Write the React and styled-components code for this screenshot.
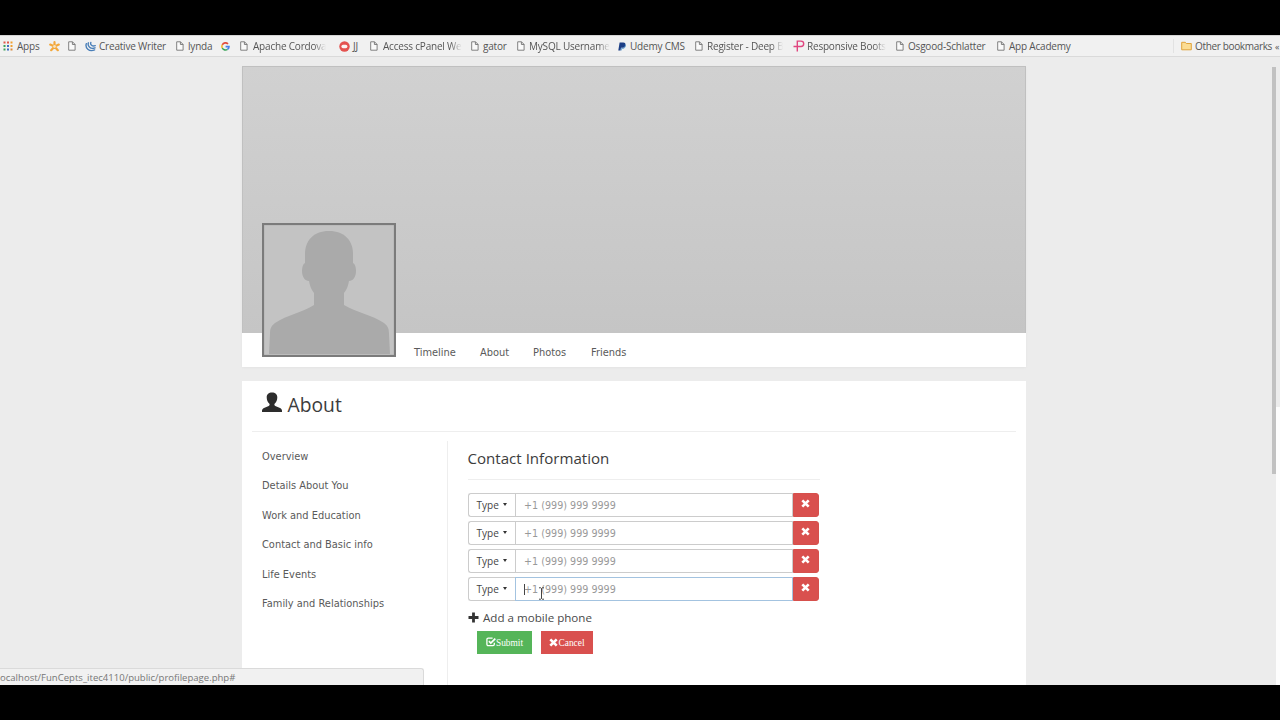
import styled, { createGlobalStyle, css } from "styled-components";

const phones = [1, 2, 3, 4];

const sections = [
  "Overview",
  "Details About You",
  "Work and Education",
  "Contact and Basic info",
  "Life Events",
  "Family and Relationships",
];

const bookmarks = [
  { icon: "apps", label: "Apps", width: 46, gap: 4 },
  { icon: "star", width: 19 },
  { icon: "file", width: 17 },
  { icon: "swirl", label: "Creative Writer", width: 91, gap: 3 },
  { icon: "file", label: "lynda", width: 45, gap: 4 },
  { icon: "google", width: 19 },
  { icon: "file", label: "Apache Cordova", width: 99, gap: 5, fade: true },
  { icon: "circle", label: "JJ", width: 31, gap: 3 },
  { icon: "file", label: "Access cPanel We", width: 101, gap: 5, fade: true },
  { icon: "file", label: "gator", width: 46, gap: 4 },
  { icon: "file", label: "MySQL Username", width: 101, gap: 4, fade: true },
  { icon: "paypal", label: "Udemy CMS", width: 77, gap: 4 },
  { icon: "file", label: "Register - Deep B", width: 98, gap: 4, fade: true },
  { icon: "pink", label: "Responsive Boots", width: 103, gap: 2, fade: true },
  { icon: "file", label: "Osgood-Schlatter", width: 101, gap: 4 },
  { icon: "file", label: "App Academy", width: 80, gap: 4 },
];

const icons = {
  apps: (
    <svg width="10" height="10" viewBox="0 0 10 10">
      <path d="M0.5 0.5h2v2h-2z" fill="#e0564a" />
      <path d="M4 0.5h2v2h-2z" fill="#e0564a" />
      <path d="M7.5 0.5h2v2h-2z" fill="#f0a030" />
      <path d="M0.5 4h2v2h-2z" fill="#3da05a" />
      <path d="M4 4h2v2h-2z" fill="#3f6fc4" />
      <path d="M7.5 4h2v2h-2z" fill="#f0a030" />
      <path d="M0.5 7.5h2v2h-2z" fill="#3da05a" />
      <path d="M4 7.5h2v2h-2z" fill="#3f6fc4" />
      <path d="M7.5 7.5h2v2h-2z" fill="#d98a3c" />
    </svg>
  ),
  star: (
    <svg width="11" height="11" viewBox="0 0 11 11">
      <path
        d="M5.5 5.5V1.2M5.5 5.5L1.2 3.6M5.5 5.5L2.2 9.2M5.5 5.5L8.8 9.2M5.5 5.5L9.8 3.6"
        stroke="#f3a83c"
        strokeWidth="2.2"
        strokeLinecap="round"
        fill="none"
      />
      <circle cx="5.5" cy="5.5" r="1.4" fill="#f8e3bf" />
    </svg>
  ),
  file: (
    <svg width="8" height="10" viewBox="0 0 8 10">
      <path
        d="M0.7 0.8h3.8l2.6 2.6v5.8H0.7zM4.4 0.8v2.7h2.7"
        fill="#fafafa"
        stroke="#757575"
        strokeWidth="0.9"
      />
    </svg>
  ),
  swirl: (
    <svg width="11" height="11" viewBox="0 0 11 11">
      <path
        d="M1.4 2.6C-0.2 6.6 4 11.4 9.6 8.9M3.4 1.8C2.2 5.2 5.6 8.6 10 6.8M5.8 1.4C5 3.6 7.2 5.8 10.2 4.6"
        fill="none"
        stroke="#4a7fb8"
        strokeWidth="1.4"
        strokeLinecap="round"
      />
    </svg>
  ),
  google: (
    <svg width="9" height="9" viewBox="0 0 9 9" fill="none" strokeWidth="1.6">
      <path d="M1.3 2.8A3.5 3.5 0 0 1 7 2" stroke="#e24a3b" />
      <path d="M1.3 6A3.5 3.5 0 0 1 1.3 2.8" stroke="#f3b92f" />
      <path d="M6.5 7.3A3.5 3.5 0 0 1 1.3 6" stroke="#3ba55b" />
      <path d="M4.6 4.6H8A3.5 3.5 0 0 1 6.5 7.3" stroke="#4a80e8" />
    </svg>
  ),
  circle: (
    <svg width="11" height="11" viewBox="0 0 11 11">
      <circle cx="5.5" cy="5.5" r="5.2" fill="#e4524f" />
      <rect x="2.4" y="3.8" width="6" height="3.4" rx="1.7" fill="#fbf3f2" />
    </svg>
  ),
  paypal: (
    <svg width="8" height="9" viewBox="0 0 8 9">
      <path d="M1.6 0.6h3.6c2 0 2.6 1.3 2.1 2.9-.4 1.5-1.5 2.3-3.2 2.3H3L2.5 8.5H0.3z" fill="#1d3f86" />
      <path d="M7.3 2.6c.6 2.2-.8 3.9-2.9 3.9H3.5L3.1 8.5" fill="none" stroke="#2a7cc2" strokeWidth="0.7" />
    </svg>
  ),
  pink: (
    <svg width="12" height="12" viewBox="0 0 12 12">
      <path
        d="M0.5 6.5H8a2.7 2.7 0 0 0 0-5.4H4.3V11.5"
        fill="none"
        stroke="#e0457f"
        strokeWidth="1.4"
      />
    </svg>
  ),
};

const Cross = () => (
  <svg width="9" height="9" viewBox="0 0 9 9">
    <path d="M1.3 1.3L7.7 7.7M7.7 1.3L1.3 7.7" stroke="#fff" strokeWidth="2.6" />
  </svg>
);

const Check = () => (
  <svg width="10" height="10" viewBox="0 0 10 10">
    <path
      d="M6.6 1.2H2.2a1.3 1.3 0 0 0-1.3 1.3v4.8a1.3 1.3 0 0 0 1.3 1.3H7a1.3 1.3 0 0 0 1.3-1.3V5.8"
      fill="none"
      stroke="#fff"
      strokeWidth="1.3"
    />
    <path d="M2.9 4.2L4.8 6.1L9.3 1.6" fill="none" stroke="#fff" strokeWidth="1.7" />
  </svg>
);

const Plus = () => (
  <svg width="11" height="11" viewBox="0 0 11 11">
    <path d="M5.5 0.5V10.5M0.5 5.5H10.5" stroke="#333" strokeWidth="2.8" />
  </svg>
);

const Person = () => (
  <svg width="20" height="20" viewBox="0 0 20 20">
    <path
      d="M10 0.500C6.800 0.500 4.700 2.300 4.700 5.300c0 2.700 1 5.200 2.700 6.500.5.9.2 1.800-.7 2.200L2 16C.7 16.700 0 17.600 0 18.700V20h20v-1.300c0-1.100-.7-2-2-2.700l-4.700-2c-.9-.4-1.200-1.300-.7-2.200 1.700-1.300 2.700-3.800 2.700-6.500 0-3-2.100-4.800-5.300-4.800z"
      fill="#2d2d2d"
    />
  </svg>
);

const Silhouette = () => (
  <svg width="128" height="128" viewBox="0 0 128 128">
    <path
      d="M64 5C48 5 40 15 40 28v9c-2 1-3 4-3 8 0 6 3 10 7 10 1 5 2 8 5 12v12C38 86 22 89 10 97c-4 3-5 6-5 11L4 128H125l-1-20c0-5-1-8-5-11C107 89 91 86 79 79V67c3-4 4-7 5-12 4 0 7-4 7-10 0-4-1-7-3-8V28C88 15 80 5 64 5z"
      fill="#aaa"
    />
  </svg>
);

const App = () => {
  return (
    <Screen>
      <GlobalStyle />
      <BookmarkBar>
        {bookmarks.map(({ icon, label, width, gap, fade }, index) => (
          <Bookmark key={index} $width={width} $gap={gap}>
            {icons[icon]}
            {label && <BookmarkLabel $fade={fade}>{label}</BookmarkLabel>}
          </Bookmark>
        ))}
        <OtherBookmarks>
          <svg width="11" height="10" viewBox="0 0 11 10">
            <path d="M0.7 1.3h3.6l1 1.2h5v6.3H0.7z" fill="#fbdc93" stroke="#dfa33c" />
          </svg>
          <BookmarkLabel>Other bookmarks</BookmarkLabel>
          <Chevron>«</Chevron>
        </OtherBookmarks>
      </BookmarkBar>
      <Page>
        <Content>
          <ProfileCard>
            <Cover />
            <ProfileNav>
              <Avatar>
                <Silhouette />
              </Avatar>
              <NavItem $width={66}>Timeline</NavItem>
              <NavItem $width={53}>About</NavItem>
              <NavItem $width={58}>Photos</NavItem>
              <NavItem>Friends</NavItem>
            </ProfileNav>
          </ProfileCard>
          <AboutPanel>
            <PanelHeader>
              <Person />
              <PanelTitle>About</PanelTitle>
            </PanelHeader>
            <Columns>
              <Sidebar>
                {sections.map((section) => (
                  <li key={section}>{section}</li>
                ))}
              </Sidebar>
              <Contact>
                <ContactTitle>Contact Information</ContactTitle>
                <PhoneList>
                  {phones.map((phone) => (
                    <PhoneRow key={phone}>
                      <TypeButton>
                        Type <Caret />
                      </TypeButton>
                      <PhoneInput $focused={phone === 4}>
                        {phone === 4 && <TextCursor />}
                        +1 (999) 999 9999
                      </PhoneInput>
                      <RemoveButton>
                        <Cross />
                      </RemoveButton>
                      {phone === 4 && (
                        <Pointer width="7" height="13" viewBox="0 0 7 13">
                          <path
                            d="M1 0.8h1.8l.7.7.7-.7H6M3.5 1.5v10M1 12.2h1.8l.7-.7.7.7H6"
                            fill="none"
                            stroke="#444"
                          />
                        </Pointer>
                      )}
                    </PhoneRow>
                  ))}
                </PhoneList>
                <AddPhone>
                  <Plus />
                  Add a mobile phone
                </AddPhone>
                <Actions>
                  <ActionButton $color="#55b559" $width={55}>
                    <Check />
                    Submit
                  </ActionButton>
                  <ActionButton $color="#d9504e" $width={52}>
                    <Cross />
                    Cancel
                  </ActionButton>
                </Actions>
              </Contact>
            </Columns>
          </AboutPanel>
        </Content>
        <Scrollbar>
          <Track>
            <Thumb />
          </Track>
          <WindowEdge />
        </Scrollbar>
        <StatusBar>ocalhost/FunCepts_itec4110/public/profilepage.php#</StatusBar>
      </Page>
    </Screen>
  );
};

const GlobalStyle = createGlobalStyle`
  * {
    box-sizing: border-box;
  }
  body {
    margin: 0;
    background: #000;
  }
  svg {
    flex: none;
    display: block;
  }
`;

const Screen = styled.div`
  width: 1280px;
  height: 720px;
  padding: 35px 0;
  overflow: hidden;
  display: flex;
  flex-direction: column;
  background: #000;
  font-family: "DejaVu Sans", sans-serif;
  font-size: 9.85px;
  color: #5a5a5a;
`;

const BookmarkBar = styled.div`
  height: 22px;
  flex: none;
  display: flex;
  align-items: center;
  padding-left: 3px;
  background: #f1f1f1;
  border-top: 1px solid #d4d4d4;
  border-bottom: 1px solid #dadada;
  font-family: "Open Sans", sans-serif;
  font-size: 10px;
  letter-spacing: -0.2px;
  color: #555;
`;

const Bookmark = styled.div`
  width: ${(props) => props.$width}px;
  flex: none;
  display: flex;
  align-items: center;
  gap: ${(props) => props.$gap || 0}px;
  padding-right: 10px;
`;

const BookmarkLabel = styled.span`
  white-space: nowrap;
  line-height: 16px;
  ${(props) =>
    props.$fade &&
    css`
      mask-image: linear-gradient(to right, #000 calc(100% - 12px), transparent);
    `}
`;

const OtherBookmarks = styled.div`
  display: flex;
  align-items: center;
  gap: 3px;
  height: 14px;
  margin-left: auto;
  padding-left: 7px;
  width: 107px;
  border-left: 1px solid #e2e2e2;
  letter-spacing: -0.34px;
`;

const Chevron = styled.span`
  font-size: 9px;
`;

const Page = styled.div`
  position: relative;
  flex: 1;
  min-height: 0;
  display: flex;
  background: #ececec;
  overflow: hidden;
`;

const Content = styled.main`
  width: 784px;
  margin: 9px auto 0 242px;
  display: flex;
  flex-direction: column;
`;

const ProfileCard = styled.section`
  height: 301px;
  flex: none;
  margin-bottom: 14px;
  background: #fff;
  box-shadow: 0 1px 2px #e4e4e4;
`;

const Cover = styled.div`
  height: 267px;
  background: linear-gradient(#d1d1d1, #c5c5c5);
  border: 1px solid #c0c0c0;
  border-bottom-width: 0;
`;

const ProfileNav = styled.nav`
  height: 34px;
  display: flex;
  align-items: center;
  padding: 4px 0 0 20px;
`;

const Avatar = styled.div`
  width: 134px;
  height: 134px;
  flex: none;
  align-self: flex-end;
  margin: 0 18px 10px 0;
  display: flex;
  border: 2px solid #7b7b7b;
  padding: 1px;
  background: #c3c3c3;
  box-shadow: inset 0 0 1px #7b7b7b;
`;

const NavItem = styled.a`
  width: ${(props) => (props.$width ? `${props.$width}px` : "auto")};
`;

const AboutPanel = styled.section`
  flex: 1;
  display: flex;
  flex-direction: column;
  padding: 0 10px;
  background: #fff;
`;

const PanelHeader = styled.header`
  height: 51px;
  display: flex;
  gap: 5.5px;
  padding: 11px 0 0 10px;
  border-bottom: 1px solid #eee;
`;

const PanelTitle = styled.h2`
  margin: 0;
  font: 400 19.3px/25px "Open Sans", sans-serif;
  color: #3c3c3c;
`;

const Columns = styled.div`
  flex: 1;
  display: flex;
  margin-top: 9px;
`;

const Sidebar = styled.ul`
  width: 196px;
  margin: 0;
  padding: 1px 0 0 10px;
  list-style: none;
  border-right: 1px solid #eee;
  li {
    height: 29.4px;
    line-height: 30px;
  }
`;

const Contact = styled.div`
  width: 352px;
  margin-left: 19.5px;
`;

const ContactTitle = styled.h3`
  height: 39px;
  margin: 0 0 13px;
  font: 400 15.1px/34px "Open Sans", sans-serif;
  color: #3c3c3c;
  border-bottom: 1px solid #eee;
`;

const PhoneList = styled.div`
  display: flex;
  flex-direction: column;
  gap: 4px;
`;

const PhoneRow = styled.div`
  position: relative;
  display: flex;
  height: 24px;
`;

const TypeButton = styled.button`
  width: 47.5px;
  display: flex;
  align-items: center;
  gap: 4px;
  padding: 0 0 1px 8px;
  border: 1px solid #ccc;
  border-right: 0;
  border-radius: 3px 0 0 3px;
  background: #fff;
  font: 10px "Open Sans", sans-serif;
  color: #444;
`;

const Caret = styled.span`
  border: 2.5px solid transparent;
  border-top: 3px solid #333;
  border-bottom: 0;
`;

const PhoneInput = styled.div`
  width: 278px;
  display: flex;
  align-items: center;
  padding: 1px 0 0 8px;
  border: 1px solid ${(props) => (props.$focused ? "#a3c3e0" : "#ccc")};
  font-size: 9.6px;
  color: #999;
`;

const TextCursor = styled.span`
  width: 1px;
  height: 11px;
  margin-right: -1px;
  background: #444;
`;

const RemoveButton = styled.button`
  width: 26px;
  display: flex;
  align-items: center;
  justify-content: center;
  padding: 0 1px 3px 0;
  border: 1px solid #d6504c;
  border-radius: 0 3px 3px 0;
  background: #d9504e;
`;

const Pointer = styled.svg`
  position: absolute;
  left: 70.5px;
  top: 10px;
`;

const AddPhone = styled.div`
  height: 22px;
  display: flex;
  align-items: center;
  gap: 4.5px;
  margin-top: 5px;
  font: 11.6px "Open Sans", sans-serif;
  color: #4a4a4a;
`;

const Actions = styled.div`
  display: flex;
  gap: 9px;
  margin: 3px 0 0 9.5px;
`;

const ActionButton = styled.button`
  width: ${(props) => props.$width}px;
  height: 23px;
  display: flex;
  align-items: center;
  justify-content: center;
  padding: 1px 0 0;
  border: 0;
  background: ${(props) => props.$color};
  font: 9.4px "Liberation Serif", serif;
  color: #fff;
  svg {
    margin-top: -2px;
  }
`;

const Scrollbar = styled.div`
  width: 8px;
  display: flex;
`;

const Track = styled.div`
  width: 4px;
  padding-top: 10px;
`;

const Thumb = styled.div`
  height: 407px;
  background: #c1c1c1;
`;

const WindowEdge = styled.div`
  width: 4px;
  margin-top: 350px;
  background: #fdfdfd;
`;

const StatusBar = styled.div`
  position: absolute;
  left: -1px;
  bottom: 0;
  width: 425px;
  height: 17px;
  border: 1px solid #dadada;
  border-bottom: 0;
  border-top-right-radius: 3px;
  background: #f1f1f1;
  font: 9.55px/17px "Open Sans", sans-serif;
  color: #777;
`;

export default App;
